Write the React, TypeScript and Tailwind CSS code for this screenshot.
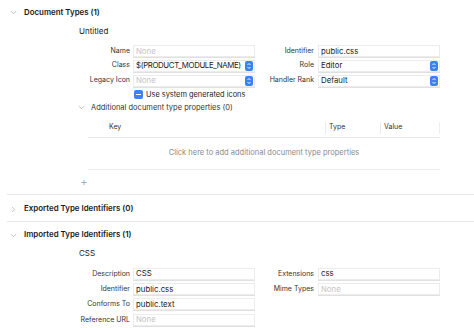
import React from "react"

const font = { fontFamily: 'Inter, "Noto Sans", "Liberation Sans", sans-serif' }

function Chevron({ open }: { open: boolean }) {
    return (
        <svg width="7" height="7" viewBox="0 0 7 7" className="shrink-0">
            {open ? (
                <path d="M1 2.2 L3.5 4.7 L6 2.2" fill="none" stroke="#b5b5b5" strokeWidth="0.9" />
            ) : (
                <path d="M2.2 1 L4.7 3.5 L2.2 6" fill="none" stroke="#b5b5b5" strokeWidth="0.9" />
            )}
        </svg>
    )
}

function Stepper() {
    return (
        <span className="w-[8px] h-[10px] rounded-[2px] bg-[#3b82f6] flex items-center justify-center shrink-0">
            <svg width="6" height="8" viewBox="0 0 6 8">
                <path d="M1.5 3 L3 1.5 L4.5 3 M1.5 5 L3 6.5 L4.5 5" fill="none" stroke="white" strokeWidth="0.9" />
            </svg>
        </span>
    )
}

function Field({ value, placeholder, popup, tight }: { value?: string; placeholder?: string; popup?: boolean; tight?: boolean }) {
    return (
        <div className="w-[122px] h-[12px] bg-white border border-[#ececec] shadow-[0_0.5px_0.5px_rgba(0,0,0,0.12)] flex items-center pl-[2px] pr-[1px]">
            <span
                className={`flex-1 whitespace-nowrap text-[7.8px] leading-[11px] ${tight ? "tracking-[-0.35px]" : ""} ${
                    value ? "text-[#222]" : "text-[#c4c4c4]"
                }`}
            >
                {value ?? placeholder}
            </span>
            {popup && <Stepper />}
        </div>
    )
}

function Row({
    label,
    field,
    rightLabel,
    rightField,
    h,
}: {
    label: string
    field: React.ReactNode
    rightLabel?: string
    rightField?: React.ReactNode
    h: string
}) {
    return (
        <div className={`flex items-center ${h}`}>
            <div className="w-[133px] text-right text-[7px] text-[#333] pr-[3px]">{label}</div>
            {field}
            {rightLabel && (
                <>
                    <div className="w-[63px] text-right text-[7px] text-[#333] pr-[4px]">{rightLabel}</div>
                    {rightField}
                </>
            )}
        </div>
    )
}

function SectionHeader({ title, open }: { title: string; open: boolean }) {
    return (
        <div className="flex items-center h-[13px] pl-[10px] gap-[7px]">
            <Chevron open={open} />
            <span className="text-[7.9px] font-semibold text-[#1a1a1a]">{title}</span>
        </div>
    )
}

export default function App() {
    return (
        <div className="w-[474px] h-[328px] bg-white overflow-hidden flex flex-col" style={font}>
            <div className="pt-[6px]">
                <SectionHeader title="Document Types (1)" open />
            </div>
            <div className="pl-[79px] pt-[5px] h-[19px] flex items-center text-[8px] text-[#222]">Untitled</div>

            <div className="pt-[7px] flex flex-col">
                <Row h="h-[14px]" label="Name" field={<Field placeholder="None" />} rightLabel="Identifier" rightField={<Field value="public.css" />} />
                <Row h="h-[15px]" label="Class" field={<Field value="$(PRODUCT_MODULE_NAME)" popup tight />} rightLabel="Role" rightField={<Field value="Editor" popup />} />
                <Row h="h-[15px]" label="Legacy Icon" field={<Field placeholder="None" popup />} rightLabel="Handler Rank" rightField={<Field value="Default" popup />} />
                <div className="flex items-center h-[12px] pl-[134px] gap-[3px]">
                    <span className="w-[9px] h-[9px] rounded-[2px] bg-[#3b82f6] flex items-center justify-center">
                        <span className="w-[5px] h-[1.2px] bg-white" />
                    </span>
                    <span className="text-[7.4px] text-[#222]">Use system generated icons</span>
                </div>
            </div>

            <div className="flex items-center h-[12px] mt-[2px] pl-[78px] gap-[6px]">
                <Chevron open />
                <span className="text-[7.5px] text-[#333]">Additional document type properties (0)</span>
            </div>

            <div className="ml-[88px] w-[352px] mt-[8px]">
                <div className="flex h-[12px] items-center border-b border-[#e8e8e8] pb-[3px] box-content text-[7px] text-[#333]">
                    <span className="w-[237px] pl-[21px]">Key</span>
                    <span className="w-[55px] pl-[3px] border-l border-[#e8e8e8] h-[12px] flex items-center">Type</span>
                    <span className="flex-1 pl-[3px] border-l border-[#e8e8e8] h-[12px] flex items-center">Value</span>
                    <span className="w-0 border-l border-[#eeeeee] h-[12px]" />
                </div>
                <div className="h-[32px] flex items-center justify-center border-b border-[#ececec] text-[7.5px] text-[#8a8a8a]">
                    Click here to add additional document type properties
                </div>
            </div>

            <div className="pl-[80px] h-[14px] flex items-center mt-[6px] text-[12px] text-[#a0a0a0] font-light leading-none">+</div>

            <div className="ml-[7px] mt-[5px] border-t border-[#e8e8e8]" />
            <div className="pt-[8px] pb-[5px]">
                <SectionHeader title="Exported Type Identifiers (0)" open={false} />
            </div>
            <div className="ml-[7px] border-t border-[#e8e8e8]" />
            <div className="pt-[7px]">
                <SectionHeader title="Imported Type Identifiers (1)" open />
            </div>
            <div className="pl-[79px] pt-[5px] h-[19px] flex items-center text-[8px] text-[#222]">CSS</div>

            <div className="pt-[6px] flex flex-col">
                <Row h="h-[16px]" label="Description" field={<Field value="CSS" />} rightLabel="Extensions" rightField={<Field value="css" />} />
                <Row h="h-[15px]" label="Identifier" field={<Field value="public.css" />} rightLabel="Mime Types" rightField={<Field placeholder="None" />} />
                <Row h="h-[15px]" label="Conforms To" field={<Field value="public.text" />} />
                <Row h="h-[16px]" label="Reference URL" field={<Field placeholder="None" />} />
            </div>
        </div>
    )
}
